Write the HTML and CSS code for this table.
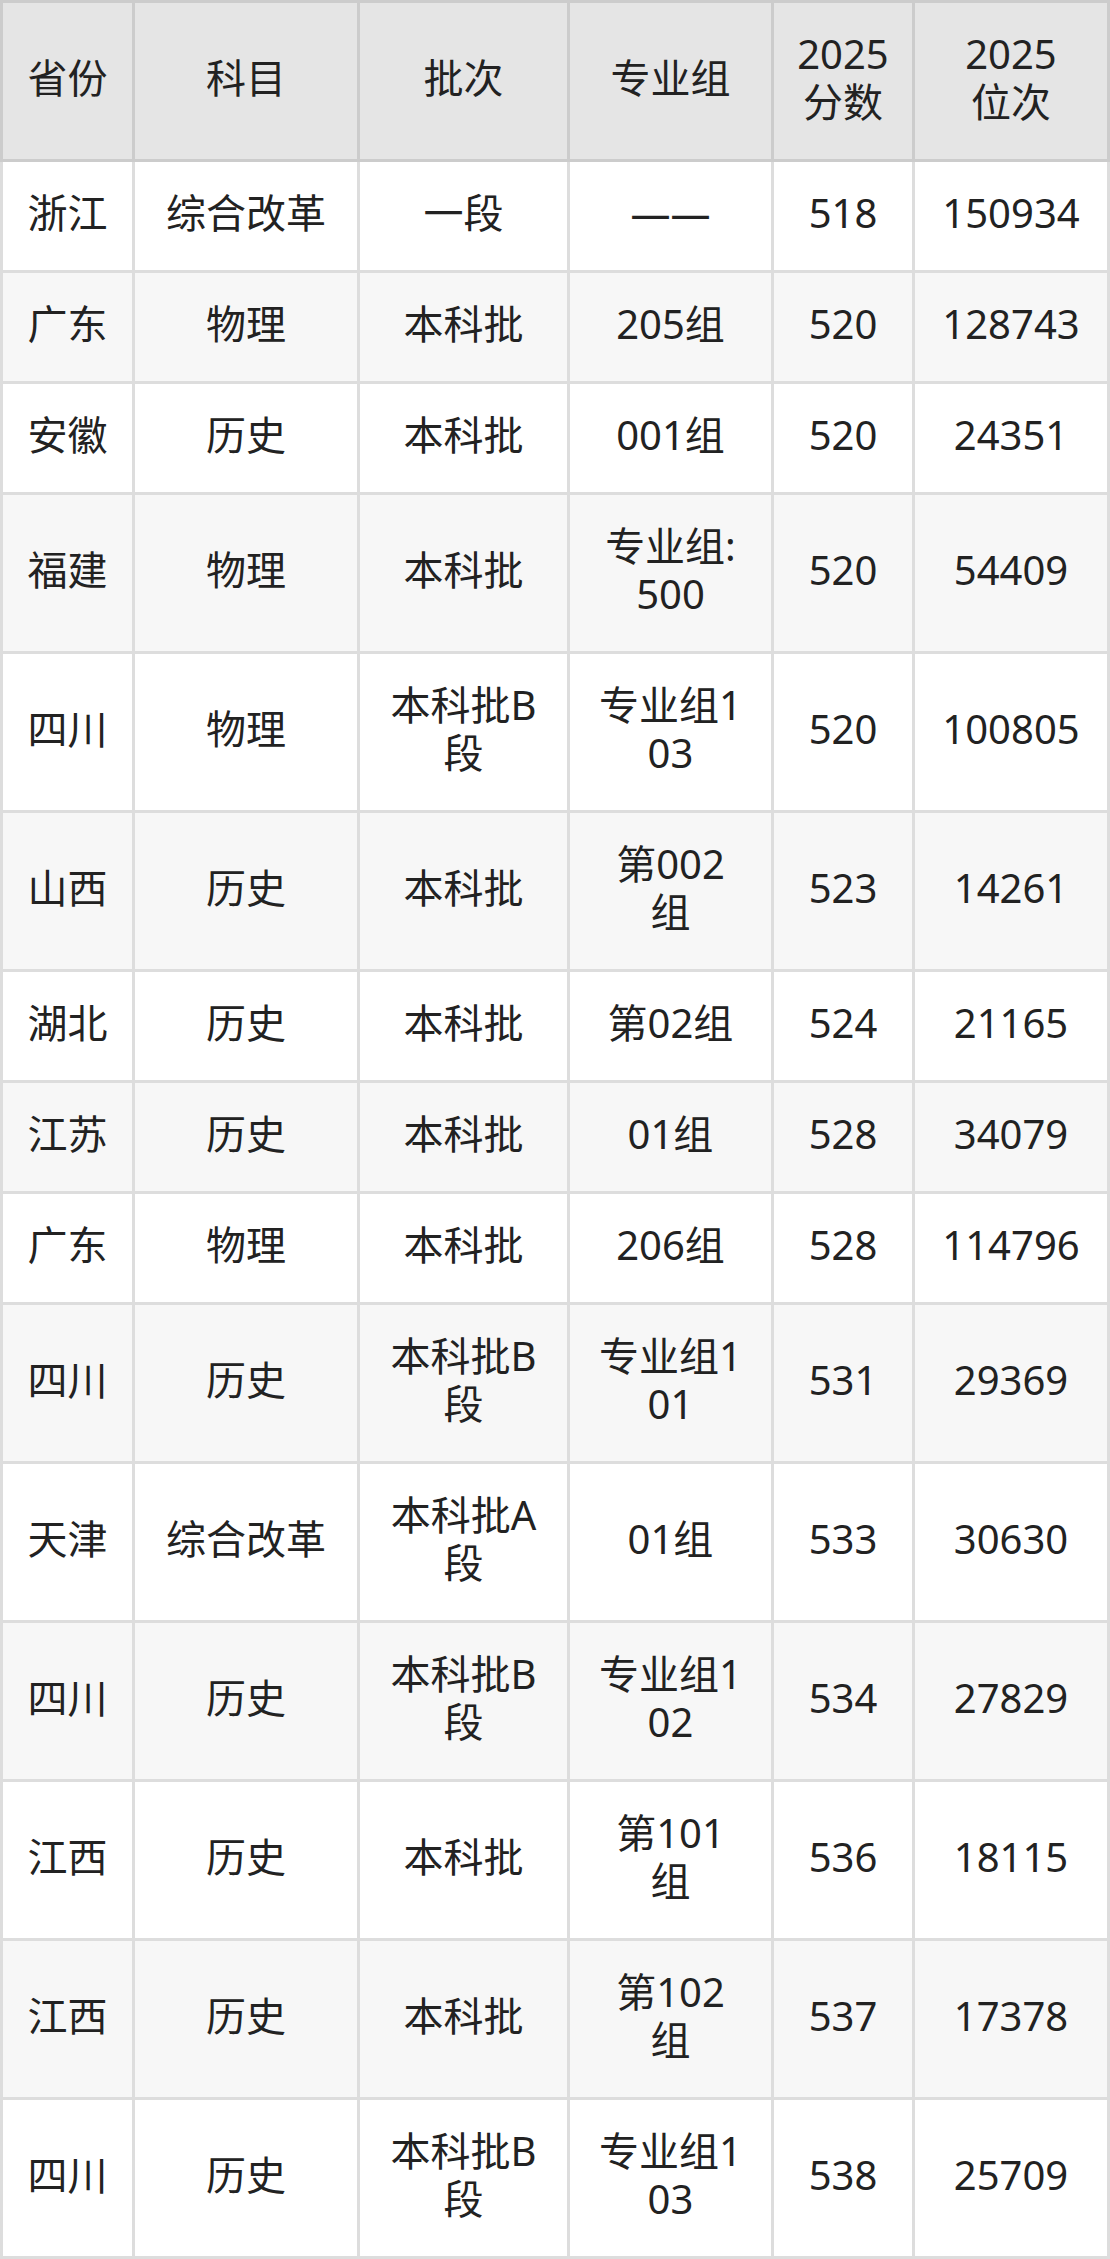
FILE: index.html
```html
<!DOCTYPE html>
<html lang="zh-CN">
<head>
<meta charset="utf-8">
<title>分数位次</title>
<link rel="stylesheet" href="styles.css">
</head>
<body>
<table class="score-table">
  <thead>
    <tr>
      <th class="c1">省份</th>
      <th class="c2">科目</th>
      <th class="c3">批次</th>
      <th class="c4">专业组</th>
      <th class="c5 two-line">2025
分数</th>
      <th class="c6 two-line">2025
位次</th>
    </tr>
  </thead>
  <tbody>
    <tr><td>浙江</td><td>综合改革</td><td>一段</td><td class="grp">——</td><td>518</td><td>150934</td></tr>
    <tr><td>广东</td><td>物理</td><td>本科批</td><td class="grp">205组</td><td>520</td><td>128743</td></tr>
    <tr><td>安徽</td><td>历史</td><td>本科批</td><td class="grp">001组</td><td>520</td><td>24351</td></tr>
    <tr><td>福建</td><td>物理</td><td>本科批</td><td class="grp">专业组:500</td><td>520</td><td>54409</td></tr>
    <tr><td>四川</td><td>物理</td><td>本科批B段</td><td class="grp">专业组103</td><td>520</td><td>100805</td></tr>
    <tr><td>山西</td><td>历史</td><td>本科批</td><td class="grp">第002组</td><td>523</td><td>14261</td></tr>
    <tr><td>湖北</td><td>历史</td><td>本科批</td><td class="grp">第02组</td><td>524</td><td>21165</td></tr>
    <tr><td>江苏</td><td>历史</td><td>本科批</td><td class="grp">01组</td><td>528</td><td>34079</td></tr>
    <tr><td>广东</td><td>物理</td><td>本科批</td><td class="grp">206组</td><td>528</td><td>114796</td></tr>
    <tr><td>四川</td><td>历史</td><td>本科批B段</td><td class="grp">专业组101</td><td>531</td><td>29369</td></tr>
    <tr><td>天津</td><td>综合改革</td><td>本科批A段</td><td class="grp">01组</td><td>533</td><td>30630</td></tr>
    <tr><td>四川</td><td>历史</td><td>本科批B段</td><td class="grp">专业组102</td><td>534</td><td>27829</td></tr>
    <tr><td>江西</td><td>历史</td><td>本科批</td><td class="grp">第101组</td><td>536</td><td>18115</td></tr>
    <tr><td>江西</td><td>历史</td><td>本科批</td><td class="grp">第102组</td><td>537</td><td>17378</td></tr>
    <tr><td>四川</td><td>历史</td><td>本科批B段</td><td class="grp">专业组103</td><td>538</td><td>25709</td></tr>
  </tbody>
</table>
</body>
</html>
```

FILE: styles.css
```css
html, body {
  margin: 0;
  padding: 0;
  background: #ffffff;
}

.score-table {
  width: 1110px;
  table-layout: fixed;
  border-collapse: separate;
  border-spacing: 0;
  font-family: "Noto Sans", "Noto Sans CJK SC", sans-serif;
  font-size: 40px;
  line-height: 48px;
  color: #222222;
}

.score-table th,
.score-table td {
  box-sizing: border-box;
  padding: 27px 20px 33px;
  text-align: center;
  vertical-align: middle;
  font-weight: normal;
  word-break: break-all;
  border-right: 3px solid #dddddd;
  border-bottom: 3px solid #dddddd;
}

.score-table th {
  background: #e5e5e5;
  border-color: #cccccc;
  border-top: 3px solid #cccccc;
}

.score-table th.two-line {
  white-space: pre-line;
}

.score-table th:first-child {
  border-left: 3px solid #cccccc;
}

.score-table td:first-child {
  border-left: 3px solid #dddddd;
}

.score-table td.grp {
  padding-left: 28px;
  padding-right: 28px;
}

.score-table tbody tr:nth-child(even) td {
  background: #f7f7f7;
}

.c1 { width: 135px; }
.c2 { width: 225px; }
.c3 { width: 210px; }
.c4 { width: 204px; }
.c5 { width: 141px; }
.c6 { width: 195px; }
```
